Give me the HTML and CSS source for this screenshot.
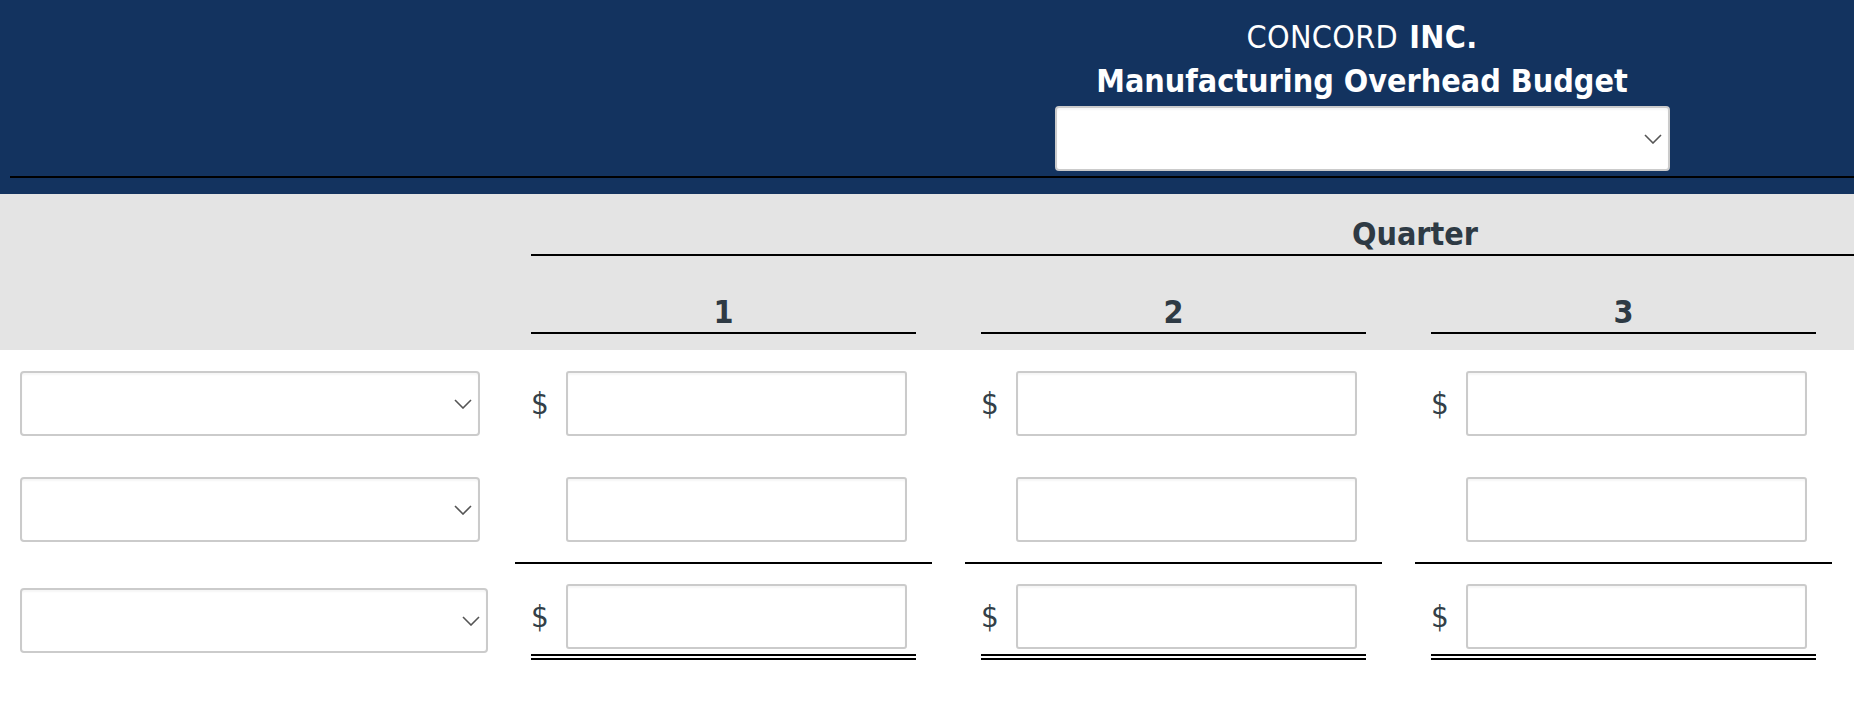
FILE: index.html
```html
<!DOCTYPE html>
<html lang="en">
<head>
  <meta charset="UTF-8" />
  <title>Manufacturing Overhead Budget</title>
  <link rel="stylesheet" href="styles.css">
</head>
<body>
  <div class="sheet">

    <!-- title block -->
    <div class="head">
      <div class="head-inner">
        <div class="company">CONCORD <b>INC.</b></div>
        <div class="title">Manufacturing Overhead Budget</div>
        <div class="pick pick-head">
          <select><option></option></select>
          <svg class="chev" width="18" height="10" viewBox="0 0 18 10"><path d="M1 1l8 8 8-8" /></svg>
        </div>
      </div>
    </div>

    <!-- column headings -->
    <div class="cols">
      <div class="grid">
        <div></div>
        <div class="quarter"><span>Quarter</span></div>
      </div>
      <div class="grid nums">
        <div></div>
        <div class="cell"><div class="qnum">1</div></div>
        <div class="cell"><div class="qnum">2</div></div>
        <div class="cell"><div class="qnum">3</div></div>
      </div>
    </div>

    <!-- rows -->
    <div class="body">
      <div class="grid row">
        <div class="label">
          <div class="pick">
            <select><option></option></select>
            <svg class="chev" width="18" height="10" viewBox="0 0 18 10"><path d="M1 1l8 8 8-8" /></svg>
          </div>
        </div>
        <div class="cell"><div class="amt"><span class="cur">$</span><input type="text" /></div></div>
        <div class="cell"><div class="amt"><span class="cur">$</span><input type="text" /></div></div>
        <div class="cell"><div class="amt"><span class="cur">$</span><input type="text" /></div></div>
      </div>

      <div class="grid row row-sub">
        <div class="label">
          <div class="pick">
            <select><option></option></select>
            <svg class="chev" width="18" height="10" viewBox="0 0 18 10"><path d="M1 1l8 8 8-8" /></svg>
          </div>
        </div>
        <div class="cell"><div class="amt subtotal"><span class="cur"></span><input type="text" /></div></div>
        <div class="cell"><div class="amt subtotal"><span class="cur"></span><input type="text" /></div></div>
        <div class="cell"><div class="amt subtotal"><span class="cur"></span><input type="text" /></div></div>
      </div>

      <div class="grid row row-total">
        <div class="label">
          <div class="pick pick-wide">
            <select><option></option></select>
            <svg class="chev" width="18" height="10" viewBox="0 0 18 10"><path d="M1 1l8 8 8-8" /></svg>
          </div>
        </div>
        <div class="cell"><div class="amt total"><span class="cur">$</span><input type="text" /></div></div>
        <div class="cell"><div class="amt total"><span class="cur">$</span><input type="text" /></div></div>
        <div class="cell"><div class="amt total"><span class="cur">$</span><input type="text" /></div></div>
      </div>
    </div>

  </div>
</body>
</html>
```

FILE: styles.css
```css
html, body {
  margin: 0;
  padding: 0;
  background: #fff;
  overflow: hidden;
}
.sheet {
  width: 2724px;
  font-family: "DejaVu Sans Condensed", "DejaVu Sans", sans-serif;
  font-stretch: condensed;
  color: #2e3a44;
}

/* header */
.head {
  background: #13335f;
  padding: 15px 0 16px;
  color: #fff;
}
.head-inner {
  margin-left: 10px;
  padding: 0 10px 5px 0;
  border-bottom: 2px solid #000;
  display: flex;
  flex-direction: column;
  align-items: center;
}
.company, .title {
  font-size: 32px;
  line-height: 44px;
}
.company {
  word-spacing: 2px;
  letter-spacing: 0.3px;
}
.title {
  font-weight: bold;
}
.pick-head {
  margin-top: 3px;
  width: 615px;
}

/* dropdowns */
.pick {
  position: relative;
  height: 65px;
}
.pick select {
  -webkit-appearance: none;
  appearance: none;
  box-sizing: border-box;
  width: 100%;
  height: 100%;
  background: #fff;
  border: 2px solid #cbcbcb;
  border-radius: 4px;
  box-shadow: inset 0 2px 2px rgba(0, 0, 0, 0.04);
  outline: none;
}
.chev {
  position: absolute;
  right: 8px;
  top: 28px;
  pointer-events: none;
}
.chev path {
  fill: none;
  stroke: #555;
  stroke-width: 1.6;
}

/* grid shared by heading and rows */
.grid {
  display: grid;
  grid-template-columns: 499px repeat(4, 450px);
  align-items: start;
}
.cell {
  padding: 0 33px 0 32px;
}

/* column headings */
.cols {
  background: #e4e4e4;
  padding: 20px 0 16px;
}
.quarter {
  grid-column: 2 / span 4;
  margin-left: 32px;
  text-align: center;
  border-bottom: 2px solid #000;
}
.quarter span, .qnum {
  font-size: 32px;
  line-height: 40px;
  font-weight: bold;
  color: #2e3a44;
}
.nums {
  margin-top: 36px;
}
.qnum {
  text-align: center;
  border-bottom: 2px solid #000;
}

/* rows */
.body {
  padding-top: 21px;
}
.row-sub {
  margin-top: 41px;
}
.row-total {
  margin-top: 20px;
}
.label {
  padding-left: 20px;
  width: 460px;
}
.pick-wide {
  width: 468px;
  margin-top: 4px;
}
.amt {
  display: flex;
  align-items: center;
  padding-right: 9px;
}
.cur {
  width: 35px;
  flex: none;
  font-size: 31px;
  color: #333f48;
  margin-top: -2px;
}
.amt input {
  flex: 1;
  min-width: 0;
  box-sizing: border-box;
  height: 65px;
  border: 2px solid #cbcbcb;
  border-radius: 3px;
  box-shadow: inset 0 2px 2px rgba(0, 0, 0, 0.04);
  background: #fff;
  outline: none;
}
.subtotal {
  margin: 0 -16px;
  padding: 0 25px 20px 16px;
  border-bottom: 2px solid #000;
}
.total {
  padding-bottom: 5px;
  border-bottom: 6px double #000;
}
```
